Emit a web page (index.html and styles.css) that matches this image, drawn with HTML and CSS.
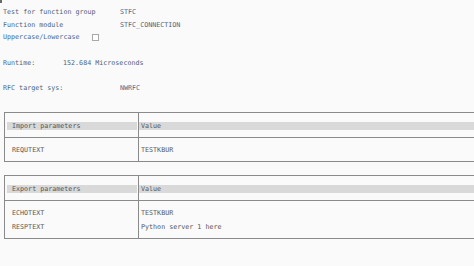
FILE: index.html
```html
<!DOCTYPE html>
<html lang="en">
<head>
    <meta charset="UTF-8">
    <title>STFC_CONNECTION</title>
    <link rel="stylesheet" href="styles.css">
</head>
<body>
    <span class="corner"></span>

    <div class="info">
        <div class="row"><span class="label">Test for function group</span><span class="value">STFC</span></div>
        <div class="row"><span class="label">Function module</span><span class="value">STFC_CONNECTION</span></div>
        <div class="row"><span class="label case">Uppercase/Lowercase</span><span class="checkbox"></span></div>
        <div class="row"></div>
        <div class="row"><span class="label short">Runtime:</span><span class="value">152.684 Microseconds</span></div>
        <div class="row"></div>
        <div class="row"><span class="label">RFC target sys:</span><span class="value">NWRFC</span></div>
    </div>

    <div class="tables">
        <table class="params">
            <thead>
                <tr>
                    <th class="name"><span>Import parameters</span></th>
                    <th class="val"><span>Value</span></th>
                </tr>
            </thead>
            <tbody>
                <tr>
                    <td class="name">REQUTEXT</td>
                    <td class="val">TESTKBUR</td>
                </tr>
            </tbody>
        </table>

        <table class="params">
            <thead>
                <tr>
                    <th class="name"><span>Export parameters</span></th>
                    <th class="val"><span>Value</span></th>
                </tr>
            </thead>
            <tbody>
                <tr>
                    <td class="name">ECHOTEXT<br>RESPTEXT</td>
                    <td class="val">TESTKBUR<br>Python server 1 here</td>
                </tr>
            </tbody>
        </table>
    </div>
</body>
</html>
```

FILE: styles.css
```css
:root {
    --bg-color: #fafafa;
    --label-color: #4a6482;
    --text-color: #555555;
    --border-color: #8a8a8a;
    --band-color: #d9d9d9;
}

body {
    margin: 0;
    padding: 0;
    background-color: var(--bg-color);
    font-family: "DejaVu Sans Mono", "Liberation Mono", monospace;
    font-size: 6.7px;
    color: var(--text-color);
    position: relative;
}

.corner {
    position: absolute;
    top: 0;
    left: 0;
    width: 2px;
    height: 3px;
    background-color: #6a6a6a;
}

/* Header info */
.info {
    padding: 6px 0 0 3px;
    color: var(--label-color);
}

.row {
    display: flex;
    align-items: center;
    height: 12.6px;
    white-space: pre;
}

.label {
    width: 117px;
}

.label.short {
    width: 60px;
}

.label.case {
    width: 89px;
    color: #3f6a9a;
}

.checkbox {
    width: 5px;
    height: 5px;
    border: 1px solid #a8a8a8;
    background-color: #fff;
}

/* Parameter tables */
.tables {
    overflow: hidden;
    padding: 18px 0 0 4px;
}

.params {
    border-collapse: collapse;
    width: 490px;
}

.params + .params {
    margin-top: 13px;
}

.params th,
.params td {
    border: 1px solid var(--border-color);
    text-align: left;
    font-weight: normal;
    vertical-align: top;
}

.params th {
    padding: 9px 0 7px 0;
    line-height: 8px;
}

.params th span {
    display: block;
    background-color: var(--band-color);
}

.params th.name {
    width: 130px;
    padding-left: 2px;
    padding-right: 1px;
}

.params th.name span {
    padding-left: 5px;
}

.params th.val span {
    padding-left: 2px;
}

.params td {
    padding: 6px 0 4px 0;
    line-height: 13.3px;
}

.params td.name {
    padding-left: 7px;
}

.params td.val {
    padding-left: 2px;
}
```
